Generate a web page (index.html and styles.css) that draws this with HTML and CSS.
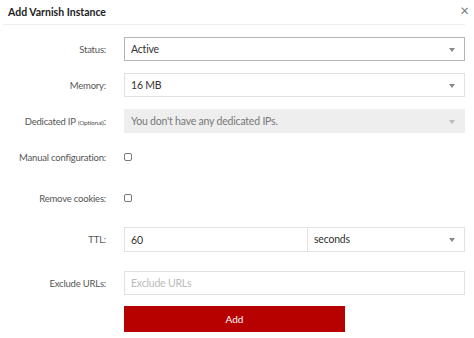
FILE: index.html
```html
<!DOCTYPE html>
<html>
<head>
  <title>Add Varnish Instance</title>
  <link rel="stylesheet" href="styles.css">
</head>
<body>
  <div class="modal">
    <div class="modal-header">
      <h3>Add Varnish Instance</h3>
      <span class="close">&times;</span>
    </div>
    <form class="modal-body">
      <div class="row">
        <label>Status:</label>
        <div class="select active-select">Active<span class="caret"></span></div>
      </div>
      <div class="row">
        <label>Memory:</label>
        <div class="select">16 MB<span class="caret"></span></div>
      </div>
      <div class="row">
        <label>Dedicated IP <small>(Optional)</small>:</label>
        <div class="select disabled">You don't have any dedicated IPs.<span class="caret"></span></div>
      </div>
      <div class="row check-row">
        <label>Manual configuration:</label>
        <div><input type="checkbox"></div>
      </div>
      <div class="row check-row cookies">
        <label>Remove cookies:</label>
        <div><input type="checkbox"></div>
      </div>
      <div class="row ttl">
        <label>TTL:</label>
        <div class="split">
          <input type="text" value="60">
          <div class="select">seconds<span class="caret"></span></div>
        </div>
      </div>
      <div class="row exclude">
        <label>Exclude URLs:</label>
        <input type="text" placeholder="Exclude URLs">
      </div>
      <div class="row submit">
        <label></label>
        <div><button type="button">Add</button></div>
      </div>
    </form>
  </div>
</body>
</html>
```

FILE: styles.css
```css
body {
  margin: 0;
  background-color: #fff;
  font-family: Lato, "Noto Sans", sans-serif;
  color: #333;
}

.modal {
  width: 474px;
  height: 338px;
}

.modal-header {
  display: flex;
  justify-content: space-between;
  align-items: center;
  height: 24px;
  margin: 0 9px 0 3px;
  border-bottom: 1px solid #eee;
}

.modal-header h3 {
  margin: 0 0 0 5px;
  font-size: 10.5px;
  font-weight: bold;
  color: #222;
}

.modal-header .close {
  font-size: 15px;
  color: #777;
  line-height: 1;
  margin: -4px -4px 0 0;
}

.modal-body {
  display: flex;
  flex-direction: column;
  gap: 12px;
  padding: 12px 9px 0 0;
}

.row {
  display: grid;
  grid-template-columns: 106px 1fr;
  column-gap: 18px;
  align-items: center;
  height: 24px;
}

.row label {
  text-align: right;
  font-size: 9.5px;
  letter-spacing: -0.2px;
  color: #555;
}

.row label small {
  font-size: 6.5px;
}

.select,
.row input[type="text"] {
  position: relative;
  box-sizing: border-box;
  height: 24px;
  line-height: 22px;
  padding: 0 6px;
  border: 1px solid #e2e2e2;
  background-color: #fff;
  font-family: inherit;
  font-size: 10.5px;
  letter-spacing: -0.2px;
  color: #333;
  width: 100%;
  margin: 0;
  outline: none;
}

.active-select {
  border-color: #b5b5b5;
}

.select.disabled {
  background-color: #eee;
  border-color: #eee;
  color: #777;
}

.caret {
  position: absolute;
  right: 9px;
  top: 10px;
  border-left: 3px solid transparent;
  border-right: 3px solid transparent;
  border-top: 4px solid #888;
}

.disabled .caret {
  border-top-color: #bbb;
}

.row input::placeholder {
  color: #bbb;
}

.check-row input[type="checkbox"] {
  appearance: none;
  display: block;
  width: 8px;
  height: 8px;
  margin: 0;
  border: 1px solid #777;
  border-radius: 2px;
  background: #fff;
}

.cookies {
  margin-top: 5px;
}

.ttl {
  margin-top: 5px;
  height: 25px;
}

.split {
  display: flex;
}

.split input[type="text"] {
  width: 183px;
  height: 25px;
  border-right: none;
}

.split .select {
  flex: 1;
  height: 25px;
}

.exclude {
  margin-top: 7px;
}

.submit {
  margin-top: -1px;
  height: 26px;
}

.submit button {
  display: block;
  width: 221px;
  height: 26px;
  border: none;
  background-color: #b70000;
  color: #fff;
  font-family: inherit;
  font-size: 10px;
  cursor: pointer;
}
```
